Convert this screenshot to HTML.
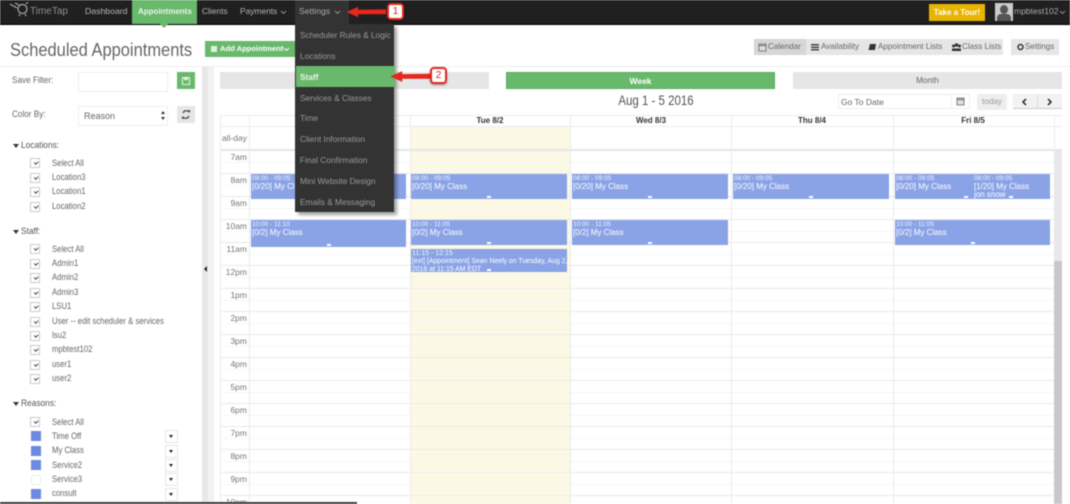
<!DOCTYPE html>
<html><head><meta charset="utf-8">
<style>
html,body{margin:0;padding:0;background:#fff}
#p{position:relative;width:1070px;height:504px;overflow:hidden;background:#fff;font-family:"Liberation Sans",sans-serif;color:#555;filter:blur(.4px)}
#p div{position:absolute;white-space:nowrap;box-sizing:border-box}
.n{top:0;height:24px;line-height:23px;font-size:8.7px;color:#b5b5b5}
.m{left:300px;font-size:8.3px;color:#999;line-height:12px}
.l{font-size:9px;color:#666;line-height:12px;left:52px;transform:scaleX(.86);transform-origin:0 50%}
.h{font-size:9.5px;color:#555;line-height:12px;left:21px;transform:scaleX(.88);transform-origin:0 50%}
.a{position:absolute;left:13px;width:0;height:0;border:3px solid transparent;border-top:4px solid #333;border-bottom:0}
.c{left:30px;width:10px;height:10px;border:1px solid #ccc;background:#fff}
.c:after{content:"";position:absolute;left:2.5px;top:1.5px;width:3px;height:1.5px;border-left:1px solid #444;border-bottom:1px solid #444;transform:rotate(-45deg)}
.s{left:31px;width:10px;height:10px;background:#6b8ae0}
.d{left:165px;width:13px;height:13px;background:#fff;border:1px solid #e6e6e6}
.d:after{content:"";position:absolute;left:3px;top:4px;border:2.5px solid transparent;border-top:3px solid #222;border-bottom:0}
.g{background:#e6e6e6;top:72px;height:17px;line-height:17px;text-align:center;font-size:8.5px;color:#666}
.t{left:220px;width:27px;text-align:right;font-size:8.5px;color:#777;line-height:12px}
.v{width:1px;top:115px;height:389px;background:#ececec}
.hd{top:115px;height:11px;line-height:12px;font-size:8px;font-weight:bold;color:#333;text-align:center;width:100px}
.e{background:#8aa3e6;color:#fff;font-size:8px;line-height:8.5px;padding:1px 1px;overflow:hidden}
.e i{display:block;font-style:normal;font-size:6.5px;line-height:7px;opacity:.9;margin-bottom:.5px}
.e b{position:absolute;width:4px;height:1.5px;background:#fff;bottom:1.5px}
.w{background:#e6e6e6;top:39px;height:16px;line-height:16px;font-size:8.1px;color:#666}
</style></head><body><div id="p">

<!-- nav -->
<div style="left:0;top:0;width:1070px;height:25px;background:#202020;border-bottom:1px solid #000"></div>
<div class="n" style="left:30px;font-size:10px;color:#8e8e8e;line-height:23px">TimeTap</div>
<div class="n" style="left:85px">Dashboard</div>
<div style="left:132px;top:0;width:65px;height:24px;background:#69b96d"></div>
<div style="left:160px;top:24px;border:4px solid transparent;border-top:4px solid #69b96d;border-bottom:0"></div>
<div class="n" style="left:138px;color:#fff;font-weight:bold;font-size:8px;opacity:.85">Appointments</div>
<div class="n" style="left:202px;font-size:8.4px">Clients</div>
<div class="n" style="left:240px;font-size:8.4px">Payments</div>
<div style="left:295px;top:0;width:54px;height:24px;background:#333"></div>
<div class="n" style="left:299px;color:#aaa;font-size:8.6px">Settings</div>

<div style="left:929px;top:4px;width:56px;height:17px;background:#e7b400;color:#fff;font-size:8px;font-weight:bold;line-height:17px;text-align:center">Take a Tour!</div>
<div style="left:995px;top:3px;width:18px;height:18px;background:#ccc;overflow:hidden">
  <div style="left:5px;top:2px;width:8px;height:9px;border-radius:50%;background:#555"></div>
  <div style="left:2px;top:11px;width:14px;height:8px;border-radius:4px 4px 0 0;background:#555"></div>
</div>
<div class="n" style="left:1014px;color:#aaa;font-size:8.5px">mpbtest102</div>

<!-- page header -->
<div style="left:10px;top:38px;font-size:18.5px;line-height:24px;color:#666;transform:scaleX(.89);transform-origin:0 50%">Scheduled Appointments</div>
<div style="left:205px;top:41px;width:90px;height:16px;background:#69b96d;color:#fff;font-size:7.6px;font-weight:bold;line-height:16px;padding-left:15px">Add Appointment</div>

<div class="w" style="left:754px;width:249px"></div>
<div style="left:754px;top:39px;width:52px;height:16px;background:#d6d6d6"></div>
<div class="w" style="left:768px;background:none">Calendar</div>
<div class="w" style="left:821px;background:none">Availability</div>
<div class="w" style="left:878px;background:none">Appointment Lists</div>
<div class="w" style="left:962px;background:none">Class Lists</div>
<div class="w" style="left:1011px;width:48px;padding-left:14px">Settings</div>

<!-- sidebar -->
<div style="left:0;top:66px;width:1070px;height:1px;background:#eee"></div>
<div style="left:202px;top:67px;width:6px;height:437px;background:#e8e8e8"></div>
<div style="left:208px;top:67px;width:6px;height:437px;background:#f2f2f2"></div>
<div style="left:204px;top:266px;border:3px solid transparent;border-right:3px solid #222;border-left:0"></div>

<div class="l" style="left:12px;top:75px;font-size:9.5px">Save Filter:</div>
<div style="left:78px;top:72px;width:90px;height:20px;border:1px solid #eee"></div>
<div style="left:177px;top:72px;width:18px;height:17px;background:#69b96d"></div>
<div class="l" style="left:12px;top:109px;font-size:9.5px">Color By:</div>
<div style="left:78px;top:106px;width:90px;height:20px;border:1px solid #eee;font-size:9px;line-height:18px;padding-left:5px;color:#666">Reason</div>
<div style="left:161px;top:111px;border:2px solid transparent;border-bottom:3px solid #333;border-top:0"></div>
<div style="left:161px;top:117px;border:2px solid transparent;border-top:3px solid #333;border-bottom:0"></div>
<div style="left:177px;top:106px;width:18px;height:17px;background:#e6e6e6"></div>

<div class="a" style="top:144px"></div><div class="h" style="top:140px">Locations:</div>
<div class="c" style="top:158px"></div><div class="l" style="top:157px">Select All</div>
<div class="c" style="top:173px"></div><div class="l" style="top:171px">Location3</div>
<div class="c" style="top:187px"></div><div class="l" style="top:185px">Location1</div>
<div class="c" style="top:202px"></div><div class="l" style="top:200px">Location2</div>

<div class="a" style="top:230px"></div><div class="h" style="top:226px">Staff:</div>
<div class="c" style="top:244px"></div><div class="l" style="top:243px">Select All</div>
<div class="c" style="top:259px"></div><div class="l" style="top:257px">Admin1</div>
<div class="c" style="top:273px"></div><div class="l" style="top:271px">Admin2</div>
<div class="c" style="top:288px"></div><div class="l" style="top:286px">Admin3</div>
<div class="c" style="top:302px"></div><div class="l" style="top:300px">LSU1</div>
<div class="c" style="top:317px"></div><div class="l" style="top:315px">User -- edit scheduler &amp; services</div>
<div class="c" style="top:331px"></div><div class="l" style="top:329px">lsu2</div>
<div class="c" style="top:345px"></div><div class="l" style="top:343px">mpbtest102</div>
<div class="c" style="top:360px"></div><div class="l" style="top:358px">user1</div>
<div class="c" style="top:374px"></div><div class="l" style="top:372px">user2</div>

<div class="a" style="top:402px"></div><div class="h" style="top:398px">Reasons:</div>
<div class="c" style="top:417px"></div><div class="l" style="top:416px">Select All</div>
<div class="s" style="top:431px"></div><div class="l" style="top:430px">Time Off</div><div class="d" style="top:430px"></div>
<div class="s" style="top:446px"></div><div class="l" style="top:444px">My Class</div><div class="d" style="top:445px"></div>
<div class="s" style="top:460px"></div><div class="l" style="top:459px">Service2</div><div class="d" style="top:459px"></div>
<div class="s" style="top:475px;background:#fff;border:1px solid #eee"></div><div class="l" style="top:473px">Service3</div><div class="d" style="top:473px"></div>
<div class="s" style="top:489px"></div><div class="l" style="top:487px">consult</div><div class="d" style="top:488px"></div>

<!-- view tabs -->
<div class="g" style="left:220px;width:269px">Day</div>
<div class="g" style="left:506px;width:269px;background:#69b96d;color:#fff;font-weight:bold;border:1px solid #5dab61">Week</div>
<div class="g" style="left:793px;width:269px;font-size:8.2px">Month</div>
<div style="left:556px;top:92px;width:200px;text-align:center;font-size:13.5px;line-height:17px;color:#555;transform:scaleX(.85)">Aug 1 - 5 2016</div>
<div style="left:838px;top:94px;width:114px;height:15px;border:1px solid #eee;font-size:8.5px;line-height:14px;padding-left:2px;color:#666">Go To Date</div>
<div style="left:951px;top:94px;width:19px;height:15px;border:1px solid #eee"></div>
<div style="left:977px;top:94px;width:30px;height:16px;background:#eee;color:#999;font-size:8.2px;line-height:16px;text-align:center">today</div>
<div style="left:1013px;top:94px;width:49px;height:15px;background:#f2f2f2;border-bottom:1px solid #ccc"></div>
<div style="left:1037px;top:94px;width:1px;height:15px;background:#ddd"></div>

<!-- calendar -->
<div style="left:410px;top:126px;width:161px;height:378px;background:#fbf8e3"></div>
<div style="left:220px;top:151px;width:834px;height:353px;background:repeating-linear-gradient(to bottom,transparent 0,transparent 11px,#f6f6f6 11px,#f6f6f6 12px,transparent 12px,transparent 22px,#ebebeb 22px,#ebebeb 23px)"></div>
<div style="left:220px;top:115px;width:842px;height:1px;background:#ececec"></div>
<div style="left:220px;top:126px;width:842px;height:1px;background:#ececec"></div>
<div style="left:220px;top:149px;width:842px;height:2px;background:#e6e6e6"></div>
<div class="v" style="left:220px"></div>
<div class="v" style="left:249px"></div>
<div class="v" style="left:410px"></div>
<div class="v" style="left:570px"></div>
<div class="v" style="left:731px"></div>
<div class="v" style="left:893px"></div>
<div class="v" style="left:1054px"></div>
<div style="left:1054px;top:151px;width:8px;height:353px;background:#e8e8e8"></div>
<div style="left:1054px;top:261px;width:8px;height:243px;background:#c8c8c8"></div>

<div class="hd" style="left:440px">Tue 8/2</div>
<div class="hd" style="left:601px">Wed 8/3</div>
<div class="hd" style="left:762px">Thu 8/4</div>
<div class="hd" style="left:923px">Fri 8/5</div>

<div class="t" style="left:220px;top:132px">all-day</div>
<div class="t" style="top:151px">7am</div>
<div class="t" style="top:174px">8am</div>
<div class="t" style="top:197px">9am</div>
<div class="t" style="top:220px">10am</div>
<div class="t" style="top:243px">11am</div>
<div class="t" style="top:266px">12pm</div>
<div class="t" style="top:289px">1pm</div>
<div class="t" style="top:312px">2pm</div>
<div class="t" style="top:335px">3pm</div>
<div class="t" style="top:358px">4pm</div>
<div class="t" style="top:381px">5pm</div>
<div class="t" style="top:404px">6pm</div>
<div class="t" style="top:427px">7pm</div>
<div class="t" style="top:450px">8pm</div>
<div class="t" style="top:473px">9pm</div>
<div class="t" style="top:496px">10pm</div>

<div class="e" style="left:251px;top:174px;width:155px;height:25px"><i>08:00 - 09:05</i>[0/20] My Class</div>
<div class="e" style="left:251px;top:220px;width:155px;height:27px"><i>10:00 - 11:10</i>[0/2] My Class<b style="left:76px"></b></div>
<div class="e" style="left:411px;top:174px;width:156px;height:25px"><i>08:00 - 09:05</i>[0/20] My Class<b style="left:76px"></b></div>
<div class="e" style="left:411px;top:220px;width:156px;height:25px"><i>10:00 - 11:05</i>[0/2] My Class<b style="left:76px"></b></div>
<div class="e" style="left:411px;top:249px;width:156px;height:23px;font-size:6.9px"><i style="font-size:7px">11:15 - 12:15</i>[ext] [Appointment] Sean Neely on Tuesday, Aug 2,<br>2016 at 11:15 AM EDT<b style="left:76px"></b></div>
<div class="e" style="left:572px;top:174px;width:156px;height:25px"><i>08:00 - 09:05</i>[0/20] My Class<b style="left:76px"></b></div>
<div class="e" style="left:572px;top:220px;width:156px;height:25px"><i>10:00 - 11:05</i>[0/2] My Class<b style="left:76px"></b></div>
<div class="e" style="left:733px;top:174px;width:156px;height:25px"><i>08:00 - 09:05</i>[0/20] My Class<b style="left:76px"></b></div>
<div class="e" style="left:895px;top:174px;width:155px;height:25px"><i>08:00 - 09:05</i>[0/20] My Class<b style="left:69px"></b></div>
<div class="e" style="left:973px;top:174px;width:77px;height:25px;background:none"><i>08:00 - 09:05</i>[1/20] My Class<br>jon snow<b style="left:36px"></b></div>
<div class="e" style="left:895px;top:220px;width:155px;height:25px"><i>10:00 - 11:05</i>[0/2] My Class<b style="left:76px"></b></div>

<!-- dropdown -->
<div style="left:295px;top:24px;width:99px;height:188px;background:#333;box-shadow:3px 3px 3px rgba(0,0,0,.35)"></div>
<div style="left:296px;top:66px;width:99px;height:21px;background:#69b96d"></div>
<div class="m" style="top:29px">Scheduler Rules &amp; Logic</div>
<div class="m" style="top:50px">Locations</div>
<div class="m" style="top:71px;color:#fff;font-weight:bold;opacity:.85">Staff</div>
<div class="m" style="top:92px">Services &amp; Classes</div>
<div class="m" style="top:112px">Time</div>
<div class="m" style="top:133px">Client Information</div>
<div class="m" style="top:154px">Final Confirmation</div>
<div class="m" style="top:175px">Mini Website Design</div>
<div class="m" style="top:196px">Emails &amp; Messaging</div>

<!-- icons and annotations -->
<svg style="position:absolute;left:0;top:0" width="1070" height="504">
<g fill="none" stroke="#aaa" stroke-width="1.2">
<circle cx="22.5" cy="9" r="4.5"/>
<path d="M10 4 L17 8 M15 3 L19 5 M26 4 L28 2 M20 14 L19 16 M25 14 L26 16"/>
</g>
<g fill="none" stroke="#999" stroke-width=".9">
<path d="M281 11 L283.5 13.5 L286 11"/>
<path d="M335 11 L337.5 13.5 L340 11"/>
<path d="M1060 11 L1062.5 13.5 L1065 11"/>
</g>
<path d="M284 48 L286.500 50.500 L289 48" fill="none" stroke="#fff" stroke-width=".9"/>
<!-- add appt icon -->
<path d="M211 46 H217 V52 H211 Z" fill="#dff0df"/>
<!-- toolbar icons -->
<path d="M759 44 H766 V51 H759 Z" fill="#ddd" stroke="#666" stroke-width=".8"/><path d="M759 45.500 H766" stroke="#666"/>
<path d="M811 44 H819 V45.500 H811 Z M811 46.500 H819 V48 H811 Z M811 49 H819 V50.500 H811 Z" fill="#444"/>
<path d="M870 44 H876 L875 50 H868.500 Z" fill="#333"/>
<circle cx="953.500" cy="46" r="1.500" fill="#333"/><circle cx="956.500" cy="45" r="1.800" fill="#333"/><circle cx="959.500" cy="46" r="1.500" fill="#333"/>
<path d="M952 51 V48.500 H961 V51 Z" fill="#333"/>
<circle cx="1020.500" cy="47" r="2.500" fill="none" stroke="#333" stroke-width="1.500"/>
<!-- save/refresh -->
<path d="M182.500 77.500 H189.500 V84.500 H182.500 Z" fill="none" stroke="#e8f5e8" stroke-width="1"/><path d="M184 77.500 H188 V80 H184 Z" fill="#e8f5e8"/>
<path d="M183 113 A3.500 3.500 0 0 1 189 112 M189 116 A3.500 3.500 0 0 1 183 117" fill="none" stroke="#444" stroke-width="1.200"/>
<path d="M188 110 L190.500 110.500 L189.500 113 Z M184 119 L181.500 118.500 L182.500 116 Z" fill="#444"/>
<!-- go to date / prev next -->
<path d="M957 98 H964 V105 H957 Z" fill="#ddd" stroke="#666" stroke-width=".8"/><path d="M957 99.500 H964" stroke="#666"/>
<path d="M1026 99 L1023 102 L1026 105 M1048 99 L1051 102 L1048 105" fill="none" stroke="#222" stroke-width="1.500"/>
<!-- red arrows -->
<path d="M347 12 L358 7 L358 10 L386 9.500 L386 14 L358 14 L358 17 Z" fill="#e8281c" stroke="#d0201a" stroke-width=".5"/>
<path d="M391 76.500 L402 71.500 L402 74.500 L431 74 L431 78.500 L402 78.500 L402 81.500 Z" fill="#e8281c" stroke="#d0201a" stroke-width=".5"/>
</svg>
<div style="left:387px;top:3px;width:17px;height:17px;background:#fff;border:2px solid #e8281c;border-radius:4px;color:#d0241a;font-size:10px;line-height:14px;text-align:center;box-shadow:0 1px 2px rgba(0,0,0,.4)">1</div>
<div style="left:430px;top:67px;width:17px;height:17px;background:#fff;border:2px solid #e8281c;border-radius:4px;color:#d0241a;font-size:10px;line-height:14px;text-align:center;box-shadow:0 1px 2px rgba(0,0,0,.4)">2</div>

<div style="left:0;top:502px;width:357px;height:2px;background:#3c3c3c"></div>
</div></body></html>
